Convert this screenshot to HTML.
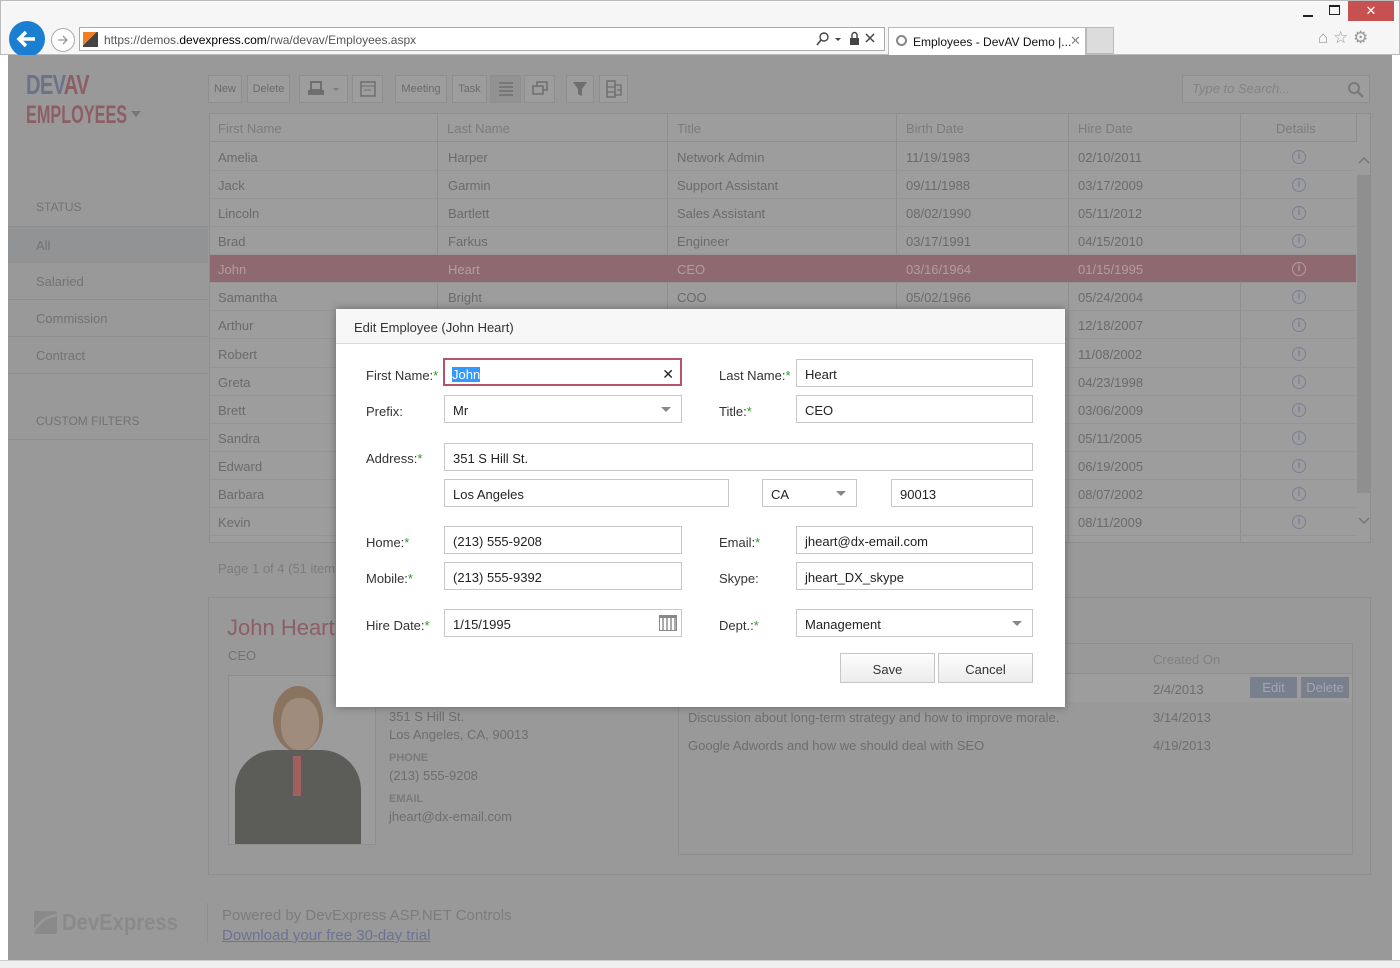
<!DOCTYPE html>
<html><head><meta charset="utf-8"><style>
*{box-sizing:border-box;margin:0;padding:0}
body{width:1400px;height:968px;overflow:hidden;background:#fff;font-family:"Liberation Sans",sans-serif;font-size:13px;color:#6b6b6b;position:relative}
.a{position:absolute}
.page{position:absolute;left:8px;top:55px;width:1384px;height:905px;background:#999}
.btn{position:absolute;top:75px;height:28px;border:1px solid #8e8e8e;background:#9d9d9d;font-size:11px;color:#6b6b6b;line-height:26px;text-align:center}
.row{position:absolute;left:210px;width:1146px;height:28px;line-height:30px;border-bottom:1px solid #959595}
.row span{position:absolute;top:0}
.c1{left:8px}.c2{left:238px}.c3{left:467px}.c4{left:696px}.c5{left:868px}
.info{position:absolute;left:1082px;top:7px;width:14px;height:14px;border:1.5px solid #7b7f95;border-radius:50%;font-size:10px;line-height:11px;text-align:center;color:#7b7f95;font-weight:bold}
.sel{background:#8e6a70;color:#b49aa0}
.sel .info{border-color:#b49aa0;color:#b49aa0}
.nav{position:absolute;left:8px;width:200px;height:37px;border-bottom:1px solid #8e8e8e;padding-left:28px;line-height:37px;color:#727272}
.dlg{position:absolute;left:336px;top:309px;width:729px;height:398px;background:#fff;box-shadow:0 0 8px rgba(0,0,0,.35);color:#333}
.lbl{position:absolute;font-size:13px;color:#333}
.lbl i{color:#2a9a2a;font-style:normal}
.inp{position:absolute;height:28px;border:1px solid #c8c8c8;padding-left:8px;line-height:29px;font-size:13px;color:#222;background:#fff}
.dd::after{content:"";position:absolute;right:10px;top:11px;border:5px solid transparent;border-top:5px solid #888}
.b2{position:absolute;height:30px;border:1px solid #c6c6c6;background:linear-gradient(#fdfdfd,#ececec);text-align:center;line-height:31px;color:#333}
</style></head><body>
<!-- browser chrome -->
<div class="a" style="left:0;top:0;width:1400px;height:55px;background:#f6f6f6;border:1px solid #bbb"></div>
<div class="a" style="left:9px;top:21px;width:36px;height:36px;border-radius:50%;background:#1a7fd1"></div>
<svg class="a" style="left:15px;top:28px" width="24" height="22"><path d="M20 11H4M11 4L4 11l7 7" stroke="#fff" stroke-width="3.5" fill="none"/></svg>
<div class="a" style="left:51px;top:28px;width:24px;height:24px;border-radius:50%;border:1px solid #aaa;background:#fff"></div>
<svg class="a" style="left:56px;top:33px" width="14" height="14"><path d="M2 7h9M7 3l4 4-4 4" stroke="#999" stroke-width="1.3" fill="none"/></svg>
<div class="a" style="left:79px;top:27px;width:806px;height:24px;background:#fff;border:1px solid #aaa"></div>
<div class="a" style="left:83px;top:32px;width:15px;height:15px;background:linear-gradient(135deg,#f08020 45%,#444 46%)"></div>
<div class="a" style="left:104px;top:33px;font-size:12px;color:#555">https://demos.<span style="color:#000">devexpress.com</span>/rwa/devav/Employees.aspx</div>
<svg class="a" style="left:815px;top:31px" width="62" height="16"><circle cx="9" cy="6" r="4" stroke="#444" stroke-width="1.4" fill="none"/><path d="M6 9l-4 5" stroke="#444" stroke-width="1.6"/><path d="M20 7l3 3 3-3z" fill="#444"/><rect x="35" y="7" width="9" height="7" fill="#444"/><path d="M37 7V4a2.5 2.5 0 015 0v3" stroke="#444" fill="none" stroke-width="1.4"/><path d="M51 3l8 8M59 3l-8 8" stroke="#444" stroke-width="1.5"/></svg>
<div class="a" style="left:888px;top:27px;width:198px;height:28px;background:#fff;border:1px solid #bbb;border-bottom:none"></div>
<div class="a" style="left:1086px;top:27px;width:28px;height:27px;background:#dcdcdc;border:1px solid #bbb"></div>
<div class="a" style="left:896px;top:35px;width:11px;height:11px;border-radius:50%;border:2px solid #888"></div>
<div class="a" style="left:913px;top:35px;font-size:12px;color:#111">Employees - DevAV Demo |...</div>
<div class="a" style="left:1070px;top:33px;font-size:13px;color:#888">✕</div>
<div class="a" style="left:1348px;top:1px;width:46px;height:20px;background:#c75050;color:#fff;text-align:center;line-height:20px;font-size:13px">✕</div>
<div class="a" style="left:1303px;top:15px;width:10px;height:2px;background:#222"></div>
<div class="a" style="left:1329px;top:5px;width:11px;height:10px;border:1px solid #222;border-top-width:2px"></div>
<div class="a" style="left:1318px;top:28px;font-size:17px;color:#999">⌂ ☆ ⚙</div>

<div class="page"></div>
<!-- logo -->
<div class="a" style="left:26px;top:70px;font:bold 28px/30px 'Liberation Sans',sans-serif;color:#6c7388;letter-spacing:-1px;transform:scaleX(.72);transform-origin:left">DEV<span style="color:#8e5e66">AV</span></div>
<div class="a" style="left:26px;top:101px;font:bold 25px/28px 'Liberation Sans',sans-serif;color:#8e5e66;transform:scaleX(.65);transform-origin:left">EMPLOYEES</div>
<div class="a" style="left:131px;top:111px;border:5px solid transparent;border-top:6px solid #777"></div>
<!-- nav -->
<div class="a" style="left:36px;top:200px;color:#727272;font-size:12px">STATUS</div>
<div class="nav" style="top:226px;background:#929394;border-top:1px solid #8e8e8e">All</div>
<div class="nav" style="top:263px">Salaried</div>
<div class="nav" style="top:300px">Commission</div>
<div class="nav" style="top:337px">Contract</div>
<div class="a" style="left:36px;top:414px;color:#727272;font-size:12px">CUSTOM FILTERS</div>
<div class="a" style="left:8px;top:439px;width:200px;height:1px;background:#8e8e8e"></div>
<!-- toolbar -->
<div class="btn" style="left:208px;width:34px">New</div>
<div class="btn" style="left:247px;width:43px">Delete</div>
<div class="btn" style="left:299px;width:49px"><svg width="40" height="26"><rect x="7" y="6" width="10" height="8" fill="none" stroke="#6e6e6e" stroke-width="2"/><rect x="4" y="14" width="16" height="5" fill="#6e6e6e"/><path d="M29 12l3 3 3-3z" fill="#7a7a7a"/></svg></div>
<div class="btn" style="left:352px;width:31px"><svg width="20" height="26"><rect x="3" y="6" width="14" height="14" fill="none" stroke="#6e6e6e" stroke-width="1.5"/><path d="M3 10h14M6 14h7" stroke="#6e6e6e"/></svg></div>
<div class="btn" style="left:395px;width:52px">Meeting</div>
<div class="btn" style="left:452px;width:35px">Task</div>
<div class="btn" style="left:490px;width:31px;background:#929292"><svg width="20" height="26"><path d="M3 7h14M3 11h14M3 15h14M3 19h14" stroke="#6e6e6e" stroke-width="1.5"/></svg></div>
<div class="btn" style="left:524px;width:31px"><svg width="20" height="26"><rect x="3" y="10" width="10" height="8" fill="none" stroke="#6e6e6e" stroke-width="1.5"/><path d="M7 10V6h10v8h-4" fill="none" stroke="#6e6e6e" stroke-width="1.5"/></svg></div>
<div class="btn" style="left:566px;width:28px"><svg width="18" height="26"><path d="M2 6h14l-5 7v7l-4-2v-5z" fill="#6e6e6e"/></svg></div>
<div class="btn" style="left:599px;width:29px"><svg width="20" height="26"><rect x="3" y="5" width="8" height="16" fill="none" stroke="#6e6e6e" stroke-width="1.5"/><path d="M3 11h8M3 16h8M11 9h6v10h-6M13 14h4" stroke="#6e6e6e" fill="none" stroke-width="1.3"/></svg></div>
<div class="btn" style="left:1182px;width:188px;text-align:left;padding-left:9px;font-style:italic;font-size:13px;color:#838383">Type to Search...<svg style="position:absolute;right:5px;top:5px" width="17" height="17"><circle cx="7" cy="7" r="5" stroke="#7a7a7a" stroke-width="2" fill="none"/><path d="M11 11l5 5" stroke="#7a7a7a" stroke-width="2.5"/></svg></div>
<!-- grid -->
<div class="a" style="left:209px;top:113px;width:1162px;height:430px;border:1px solid #8e8e8e;background:#9d9d9d"></div>
<div class="a" style="left:210px;top:113px;width:1146px;height:29px;border-bottom:1px solid #8e8e8e;color:#7c7c7c">
<span class="a" style="left:8px;top:8px">First Name</span><span class="a" style="left:237px;top:8px">Last Name</span><span class="a" style="left:467px;top:8px">Title</span><span class="a" style="left:696px;top:8px">Birth Date</span><span class="a" style="left:868px;top:8px">Hire Date</span><span class="a" style="left:1066px;top:8px">Details</span></div>
<div class="a" style="left:437px;top:113px;width:1px;height:430px;background:#8e8e8e"></div>
<div class="a" style="left:667px;top:113px;width:1px;height:430px;background:#8e8e8e"></div>
<div class="a" style="left:896px;top:113px;width:1px;height:430px;background:#8e8e8e"></div>
<div class="a" style="left:1068px;top:113px;width:1px;height:430px;background:#8e8e8e"></div>
<div class="a" style="left:1240px;top:113px;width:1px;height:430px;background:#8e8e8e"></div>
<div class="a" style="left:1356px;top:113px;width:1px;height:29px;background:#8e8e8e"></div>
<div class="a" style="left:1357px;top:175px;width:13px;height:318px;background:#8f8f8f"></div>
<svg class="a" style="left:1358px;top:156px" width="12" height="10"><path d="M1 7l5-5 5 5" stroke="#777" stroke-width="1.5" fill="none"/></svg>
<svg class="a" style="left:1358px;top:516px" width="12" height="10"><path d="M1 2l5 5 5-5" stroke="#777" stroke-width="1.5" fill="none"/></svg>

<div class="row" style="top:143px"><span class="c1">Amelia</span><span class="c2">Harper</span><span class="c3">Network Admin</span><span class="c4">11/19/1983</span><span class="c5">02/10/2011</span><div class="info">i</div></div>
<div class="row" style="top:171px"><span class="c1">Jack</span><span class="c2">Garmin</span><span class="c3">Support Assistant</span><span class="c4">09/11/1988</span><span class="c5">03/17/2009</span><div class="info">i</div></div>
<div class="row" style="top:199px"><span class="c1">Lincoln</span><span class="c2">Bartlett</span><span class="c3">Sales Assistant</span><span class="c4">08/02/1990</span><span class="c5">05/11/2012</span><div class="info">i</div></div>
<div class="row" style="top:227px"><span class="c1">Brad</span><span class="c2">Farkus</span><span class="c3">Engineer</span><span class="c4">03/17/1991</span><span class="c5">04/15/2010</span><div class="info">i</div></div>
<div class="row sel" style="top:255px"><span class="c1">John</span><span class="c2">Heart</span><span class="c3">CEO</span><span class="c4">03/16/1964</span><span class="c5">01/15/1995</span><div class="info">i</div></div>
<div class="row" style="top:283px"><span class="c1">Samantha</span><span class="c2">Bright</span><span class="c3">COO</span><span class="c4">05/02/1966</span><span class="c5">05/24/2004</span><div class="info">i</div></div>
<div class="row" style="top:311px"><span class="c1">Arthur</span><span class="c5">12/18/2007</span><div class="info">i</div></div>
<div class="row" style="top:340px"><span class="c1">Robert</span><span class="c5">11/08/2002</span><div class="info">i</div></div>
<div class="row" style="top:368px"><span class="c1">Greta</span><span class="c5">04/23/1998</span><div class="info">i</div></div>
<div class="row" style="top:396px"><span class="c1">Brett</span><span class="c5">03/06/2009</span><div class="info">i</div></div>
<div class="row" style="top:424px"><span class="c1">Sandra</span><span class="c5">05/11/2005</span><div class="info">i</div></div>
<div class="row" style="top:452px"><span class="c1">Edward</span><span class="c5">06/19/2005</span><div class="info">i</div></div>
<div class="row" style="top:480px"><span class="c1">Barbara</span><span class="c5">08/07/2002</span><div class="info">i</div></div>
<div class="row" style="top:508px"><span class="c1">Kevin</span><span class="c5">08/11/2009</span><div class="info">i</div></div>
<div class="a" style="left:218px;top:561px;color:#7c7c7c">Page 1 of 4 (51 items)</div>

<!-- detail panel -->
<div class="a" style="left:208px;top:597px;width:1163px;height:278px;border:1px solid #8e8e8e"></div>
<div class="a" style="left:227px;top:615px;font-size:22px;color:#8e5e66">John Heart</div>
<div class="a" style="left:228px;top:648px;color:#737373">CEO</div>
<div class="a" style="left:228px;top:675px;width:148px;height:170px;border:1px solid #8e8e8e;background:#9c9c9c;overflow:hidden">
<div class="a" style="left:44px;top:10px;width:50px;height:66px;border-radius:50%;background:#8a7460"></div>
<div class="a" style="left:52px;top:22px;width:38px;height:52px;border-radius:45%;background:#a08c7c"></div>
<div class="a" style="left:6px;top:74px;width:126px;height:96px;border-radius:40px 40px 0 0;background:#5c5c58"></div>
<div class="a" style="left:64px;top:80px;width:8px;height:40px;background:#a06060"></div></div>
<div class="a" style="left:389px;top:708px;line-height:18px;color:#6e6e6e">351 S Hill St.<br>Los Angeles, CA, 90013</div>
<div class="a" style="left:389px;top:752px;font-size:11px;font-weight:bold;color:#7a7a7a">PHONE</div>
<div class="a" style="left:389px;top:768px;color:#6e6e6e">(213) 555-9208</div>
<div class="a" style="left:389px;top:793px;font-size:11px;font-weight:bold;color:#7a7a7a">EMAIL</div>
<div class="a" style="left:389px;top:809px;color:#6e6e6e">jheart@dx-email.com</div>
<div class="a" style="left:678px;top:643px;width:675px;height:212px;border:1px solid #8e8e8e"></div>
<div class="a" style="left:679px;top:673px;width:673px;height:1px;background:#8e8e8e"></div>
<div class="a" style="left:679px;top:674px;width:673px;height:28px;background:#9d9d9d"></div>
<div class="a" style="left:1153px;top:652px;color:#808080">Created On</div>
<div class="a" style="left:1153px;top:682px;color:#6e6e6e">2/4/2013</div>
<div class="a" style="left:1250px;top:677px;width:47px;height:21px;background:#7a7f8e;color:#a3a6b0;text-align:center;line-height:21px">Edit</div>
<div class="a" style="left:1301px;top:677px;width:48px;height:21px;background:#7a7f8e;color:#a3a6b0;text-align:center;line-height:21px">Delete</div>
<div class="a" style="left:688px;top:710px;color:#6e6e6e">Discussion about long-term strategy and how to improve morale.</div>
<div class="a" style="left:1153px;top:710px;color:#6e6e6e">3/14/2013</div>
<div class="a" style="left:688px;top:738px;color:#6e6e6e">Google Adwords and how we should deal with SEO</div>
<div class="a" style="left:1153px;top:738px;color:#6e6e6e">4/19/2013</div>

<!-- footer -->
<svg class="a" style="left:34px;top:911px" width="24" height="23"><rect width="23" height="23" rx="2" fill="#8a8a8a"/><path d="M0 20C6 10 14 5 23 4" stroke="#999" stroke-width="2.5" fill="none"/></svg>
<div class="a" style="left:62px;top:909px;font:bold 23px 'Liberation Sans',sans-serif;color:#8a8a8a;transform:scaleX(.88);transform-origin:left">DevExpress</div>
<div class="a" style="left:207px;top:903px;width:1px;height:40px;background:#8e8e8e"></div>
<div class="a" style="left:222px;top:907px;font-size:15px;color:#7c7c7c">Powered by DevExpress ASP.NET Controls</div>
<div class="a" style="left:222px;top:927px;font-size:15px;color:#6d7194;text-decoration:underline">Download your free 30-day trial</div>
<div class="a" style="left:0;top:960px;width:1400px;height:8px;background:#f0f0f0;border-top:1px solid #ccc"></div>

<!-- dialog -->
<div class="dlg">
<div class="a" style="left:0;top:0;width:729px;height:35px;background:#f7f7f7;border-bottom:1px solid #ddd"></div>
<div class="a" style="left:18px;top:11px;color:#333">Edit Employee (John Heart)</div>
<div class="lbl" style="left:30px;top:59px">First Name:<i>*</i></div>
<div class="inp" style="left:107px;top:49px;width:239px;border:2px solid #b5556b;padding-left:7px"><span style="background:#3399ff;color:#fff">John</span><span style="position:absolute;right:6px;font-size:14px;color:#222">✕</span></div>
<div class="lbl" style="left:383px;top:59px">Last Name:<i>*</i></div>
<div class="inp" style="left:460px;top:50px;width:237px">Heart</div>
<div class="lbl" style="left:30px;top:95px">Prefix:</div>
<div class="inp dd" style="left:108px;top:86px;width:238px">Mr</div>
<div class="lbl" style="left:383px;top:95px">Title:<i>*</i></div>
<div class="inp" style="left:460px;top:86px;width:237px">CEO</div>
<div class="lbl" style="left:30px;top:142px">Address:<i>*</i></div>
<div class="inp" style="left:108px;top:134px;width:589px">351 S Hill St.</div>
<div class="inp" style="left:108px;top:170px;width:285px">Los Angeles</div>
<div class="inp dd" style="left:426px;top:170px;width:95px">CA</div>
<div class="inp" style="left:555px;top:170px;width:142px">90013</div>
<div class="lbl" style="left:30px;top:226px">Home:<i>*</i></div>
<div class="inp" style="left:108px;top:217px;width:238px">(213) 555-9208</div>
<div class="lbl" style="left:383px;top:226px">Email:<i>*</i></div>
<div class="inp" style="left:460px;top:217px;width:237px">jheart@dx-email.com</div>
<div class="lbl" style="left:30px;top:262px">Mobile:<i>*</i></div>
<div class="inp" style="left:108px;top:253px;width:238px">(213) 555-9392</div>
<div class="lbl" style="left:383px;top:262px">Skype:</div>
<div class="inp" style="left:460px;top:253px;width:237px">jheart_DX_skype</div>
<div class="lbl" style="left:30px;top:309px">Hire Date:<i>*</i></div>
<div class="inp" style="left:108px;top:300px;width:238px">1/15/1995<span style="position:absolute;right:4px;top:5px;width:18px;height:16px;border:1px solid #888;border-top:3px solid #888;background:repeating-linear-gradient(90deg,#fff 0 2px,#aaa 2px 4px)"></span></div>
<div class="lbl" style="left:383px;top:309px">Dept.:<i>*</i></div>
<div class="inp dd" style="left:460px;top:300px;width:237px">Management</div>
<div class="b2" style="left:504px;top:344px;width:95px">Save</div>
<div class="b2" style="left:602px;top:344px;width:95px">Cancel</div>
</div>
</body></html>
